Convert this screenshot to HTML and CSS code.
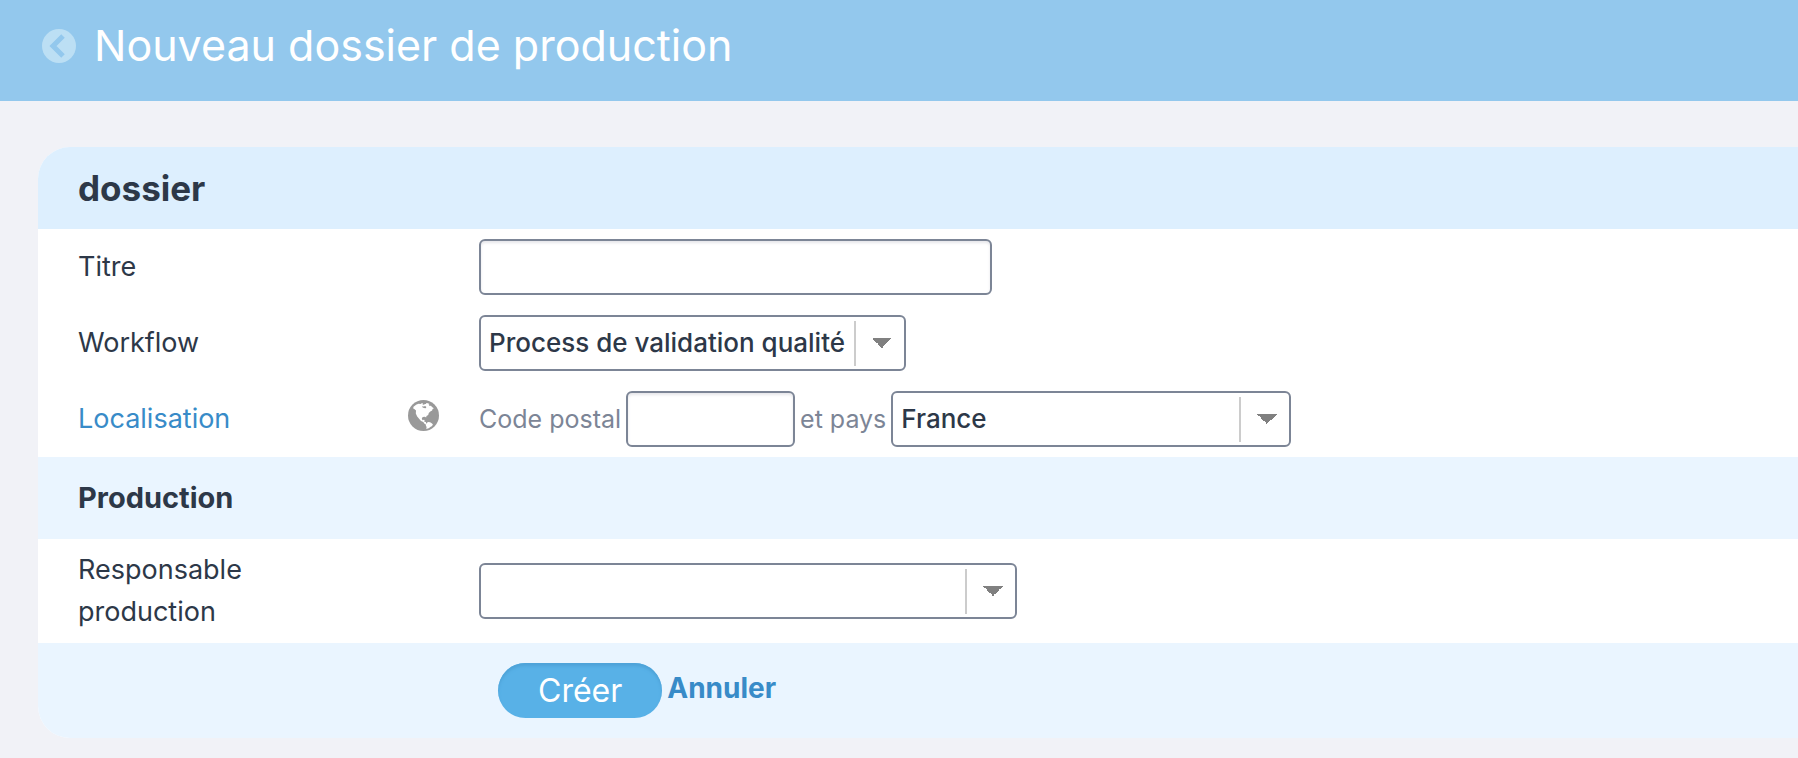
FILE: index.html
```html
<!DOCTYPE html>
<html lang="fr">
<head>
<meta charset="utf-8">
<title>Nouveau dossier de production</title>
<meta name="viewport" content="width=device-width, initial-scale=1">
<link rel="stylesheet" href="styles.css">
</head>
<body>
<header class="topbar">
  <button class="back" type="button" aria-label="Retour">
    <svg viewBox="0 0 34 34" width="34" height="34" aria-hidden="true">
      <circle cx="17" cy="17" r="17" fill="#bcdff4"/>
      <path d="M21 7 11 17l10 10" fill="none" stroke="#93c8ed" stroke-width="5" stroke-linejoin="miter"/>
    </svg>
  </button>
  <h1 class="topbar-title">Nouveau dossier de production</h1>
</header>
<main class="page">
  <form class="card">
    <h2 class="card-head">dossier</h2>
    <div class="row">
      <label class="row-label" for="titre">Titre</label>
      <input class="text-input text-input-wide" id="titre" type="text">
    </div>
    <div class="row">
      <label class="row-label" for="workflow">Workflow</label>
      <select class="select select-workflow" id="workflow"><option>Process de validation qualité</option></select>
    </div>
    <div class="row">
      <div class="row-label row-label-icon">
        <a class="link" href="#localisation">Localisation</a>
        <svg class="globe" viewBox="0 0 31 31" width="31" height="31" aria-hidden="true">
          <circle cx="15.500" cy="15.500" r="15.500" fill="#999"/>
          <path fill="#fff" d="M5.500 6.800 8.500 4.400l2.200-.7 1.900.3 1.100-.8 1.300.1-.5 1.100 1.500.4.800-.9 1.500.1-.3-1 1.900.2 1.600.7-1.100.4 1.200.8-.7 1 2.100-.3 1 1.200 1.900 1.200-1.300.8-.5 1.600-1.800.8-1.500 1.700-.6 1.800-1.700 1.200-.4 1.500-1.200-.9-2.200.3-.9 1.600.7 1.700 1.300-.5.8.2-.3 1.700 1.600.4.300 1.700 1.300.5-.9.600-2.100-1.200-1.200-1.800-2.300-.9-1.700-2.100-2.100-2.500-1.400-2.800.2-3.100-1.700-1.600-1.100-.4z"/>
          <path fill="#999" d="m14.200 6.200 1.700.4 1.200-.7 1.300 1-.7 1.300-1.900-.3-1.400-.7z"/>
          <path fill="#fff" d="m18.500 23.200 1.500-1.300 2.100.3 1.600 1 1.200 1.100-.8 1.700-1.800 1-1.600 1.200-2.400.8.300-2-.8-1.500z"/>
        </svg>
      </div>
      <div class="inline-fields">
        <label for="cp">Code postal</label>
        <input class="text-input text-input-cp" id="cp" type="text">
        <label for="pays">et pays</label>
        <select class="select select-pays" id="pays"><option>France</option></select>
      </div>
    </div>
    <h3 class="section-head">Production</h3>
    <div class="row">
      <label class="row-label" for="resp"><span class="label-narrow">Responsable production</span></label>
      <select class="select select-resp" id="resp"><option></option></select>
    </div>
    <div class="actions">
      <button class="submit" type="submit">Créer</button>
      <a class="cancel" href="#annuler">Annuler</a>
    </div>
  </form>
</main>
</body>
</html>
```
FILE: styles.css
```css
* { box-sizing: border-box; }

body {
  margin: 0;
  background: #f1f2f7;
  color: #2d3848;
  font: 27px/42px Inter, "Liberation Sans", sans-serif;
}

.topbar {
  display: flex;
  align-items: center;
  gap: 18px;
  padding: 16px 42px 25px;
  background: #93c8ed;
}

.back {
  display: flex;
  padding: 0;
  border: 0;
  background: none;
  cursor: pointer;
}

.topbar-title {
  margin: 0;
  padding-bottom: 2px;
  color: #fff;
  font-size: 43px;
  font-weight: 400;
  line-height: 58px;
}

.page { padding: 46px 0 16px 38px; }

.card {
  overflow: hidden;
  border-radius: 32px 0 0 32px;
  background: #fff;
}

.card-head,
.section-head {
  margin: 0;
  padding: 20px 40px;
  font-weight: 700;
}

.card-head {
  background: #ddeffe;
  font-size: 35px;
}

.section-head {
  background: #eaf5ff;
  font-size: 29px;
}

.row {
  display: grid;
  grid-template-columns: 361px 1fr;
  column-gap: 40px;
  align-items: center;
  justify-items: start;
  padding: 10px 40px;
}

.row-label-icon {
  display: flex;
  justify-content: space-between;
  width: 100%;
}

.label-narrow {
  display: block;
  width: 240px;
}

.link { color: #388bc8; text-decoration: none; }

.globe { margin-top: 2px; }

.inline-fields {
  display: flex;
  align-items: center;
  gap: 5px;
  color: #7c8596;
  font-size: 25px;
}

.text-input,
.select {
  height: 56px;
  margin: 0;
  padding: 0 8px;
  border: 2px solid #7c8596;
  border-radius: 6px;
  background-color: #fff;
  color: #2d3848;
  font: inherit;
}

.text-input { box-shadow: inset 0 2px 3px #e6e6ea; }

.text-input-wide { width: 513px; }
.text-input-cp { width: 169px; }

.select {
  appearance: none;
  padding-right: 48px;
  background-image:
    linear-gradient(#ccc, #ccc),
    linear-gradient(to top right, transparent 50%, #808080 50%),
    linear-gradient(to bottom right, #808080 50%, transparent 50%);
  background-position: right 48px center, right 22px center, right 12px center;
  background-size: 2px 45px, 10px 10px, 10px 10px;
  background-repeat: no-repeat;
  font-size: 26px;
  font-weight: 500;
}

.select-workflow { width: 427px; }
.select-pays { width: 400px; }
.select-resp { width: 538px; }

.actions {
  display: flex;
  align-items: center;
  gap: 5px;
  padding: 20px 40px 20px 460px;
  background: #eaf5ff;
}

.submit {
  height: 55px;
  padding: 0 40px;
  border: 0;
  border-radius: 28px;
  background: #58b1e7;
  box-shadow: inset 0 3px 3px #4ea3d8;
  color: #fff;
  font: inherit;
  font-size: 32px;
}

.cancel {
  padding-bottom: 6px;
  color: #388bc8;
  font-size: 28px;
  font-weight: 700;
  text-decoration: none;
}
```
